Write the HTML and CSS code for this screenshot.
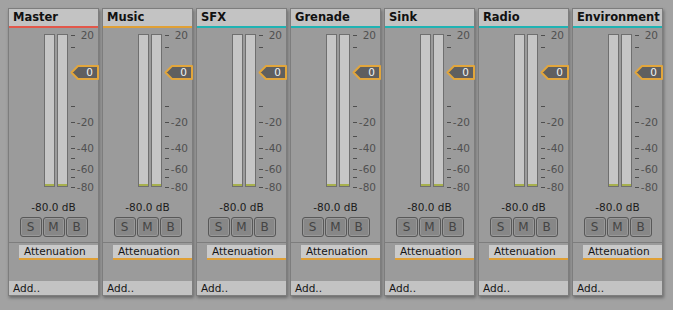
FILE: index.html
```html
<!DOCTYPE html>
<html lang="en">
<head>
    <meta charset="UTF-8">
    <meta name="viewport" content="width=device-width, initial-scale=1.0">
    <title>Audio Buses</title>
    <link rel="stylesheet" href="styles.css">
</head>
<body>
    <div id="mixer" class="mixer"></div>

    <script>
        const buses = [
            { name: "Master", color: "#e2574a" },
            { name: "Music", color: "#e0a035" },
            { name: "SFX", color: "#1fb3b3" },
            { name: "Grenade", color: "#1fb3b3" },
            { name: "Sink", color: "#1fb3b3" },
            { name: "Radio", color: "#1fb3b3" },
            { name: "Environment", color: "#1fb3b3" }
        ];

        // y = offset from the top of the meter, in px
        const marks = [
            { y: 1, label: "20" },
            { y: 13, label: "" },
            { y: 72, label: "" },
            { y: 88, label: "-20" },
            { y: 102, label: "" },
            { y: 114, label: "-40" },
            { y: 124, label: "" },
            { y: 135, label: "-60" },
            { y: 143, label: "" },
            { y: 153, label: "-80" }
        ];

        function renderScale() {
            return marks.map(m => `
                <div class="mark" style="top: ${m.y - 6}px">
                    <span class="tick"></span>
                    <span class="mark-label">${m.label}</span>
                </div>
            `).join('');
        }

        document.getElementById('mixer').innerHTML = buses.map(bus => `
            <div class="bus">
                <div class="bus-header" style="border-bottom-color: ${bus.color}">${bus.name}</div>
                <div class="meter-area">
                    <div class="meter"></div>
                    <div class="meter"></div>
                    <div class="scale">
                        ${renderScale()}
                        <div class="fader">
                            <svg width="29" height="15" viewBox="0 0 29 15">
                                <polygon points="1.5,7.5 8,1 28,1 28,14 8,14" fill="#5f5f5f" stroke="#e2a63c" stroke-width="2" stroke-linejoin="round"/>
                            </svg>
                            <span class="fader-value">0</span>
                        </div>
                    </div>
                </div>
                <div class="db-label">-80.0 dB</div>
                <div class="buttons">
                    <span class="btn">S</span>
                    <span class="btn">M</span>
                    <span class="btn">B</span>
                </div>
                <div class="effects">
                    <div class="effect">Attenuation</div>
                </div>
                <div class="add">Add..</div>
            </div>
        `).join('');
    </script>
</body>
</html>
```

FILE: styles.css
```css
* {
    margin: 0;
    padding: 0;
    box-sizing: border-box;
}

body {
    font-family: 'DejaVu Sans', 'Liberation Sans', sans-serif;
    background: #a2a2a2;
    padding: 8px;
}

.mixer {
    display: flex;
    gap: 3px;
}

.bus {
    width: 91px;
    height: 288px;
    background: #9b9b9b;
    border: 1px solid #7d7d7d;
    display: flex;
    flex-direction: column;
    box-shadow: 1px 2px 3px rgba(0, 0, 0, 0.35);
}

.bus-header {
    height: 19px;
    background: #c3c3c3;
    border-bottom: 2px solid #1fb3b3;
    font-size: 11.5px;
    font-weight: 700;
    color: #111;
    line-height: 17px;
    padding-left: 4px;
    white-space: nowrap;
    overflow: hidden;
}

.meter-area {
    display: flex;
    height: 153px;
    margin-top: 6px;
    padding-left: 35px;
    gap: 2px;
}

.meter {
    width: 11px;
    height: 153px;
    background: linear-gradient(to top, #a7b04e 0, #a7b04e 2px, #c6c6c6 2px);
    border: 1px solid #6f6f6f;
}

.scale {
    position: relative;
    flex: 1;
    margin-left: 1px;
}

.mark {
    position: absolute;
    left: 0;
    right: 4px;
    height: 12px;
    display: flex;
    align-items: center;
}

.tick {
    width: 4px;
    height: 1px;
    background: #4e4e4e;
}

.mark-label {
    flex: 1;
    text-align: right;
    font-size: 10.5px;
    line-height: 12px;
    color: #505050;
}

.fader {
    position: absolute;
    top: 31px;
    left: -1px;
    width: 29px;
    height: 15px;
}

.fader svg {
    display: block;
}

.fader-value {
    position: absolute;
    right: 6px;
    top: 0;
    font-size: 10.5px;
    line-height: 15px;
    color: #f2f2f2;
}

.db-label {
    margin-top: 14px;
    height: 12px;
    font-size: 10.5px;
    line-height: 12px;
    text-align: center;
    color: #1c1c1c;
}

.buttons {
    display: flex;
    justify-content: center;
    gap: 1px;
    margin-top: 4px;
}

.btn {
    width: 22px;
    height: 20px;
    background: #878787;
    border: 1px solid #585858;
    border-radius: 3px;
    box-shadow: inset 0 0 0 1px rgba(255, 255, 255, 0.14);
    font-size: 12px;
    line-height: 18px;
    text-align: center;
    color: #444;
}

.effects {
    flex: 1;
    margin-top: 5px;
    border-top: 1px solid #7d7d7d;
    padding: 2px 0 0 10px;
}

.effect {
    height: 15px;
    background: #cacaca;
    border-bottom: 2px solid #e0a035;
    font-size: 10.5px;
    line-height: 13px;
    padding-left: 5px;
    color: #151515;
}

.add {
    height: 14px;
    background: #c3c3c3;
    font-size: 10.5px;
    line-height: 14px;
    padding-left: 4px;
    color: #151515;
}
```
